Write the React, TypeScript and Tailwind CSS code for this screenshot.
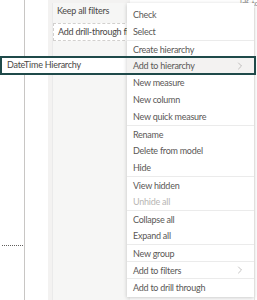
import { ChevronRight } from 'lucide-react'

type Item = { label: string; sep?: boolean; disabled?: boolean; sub?: boolean; active?: boolean }

const items: Item[] = [
  { label: 'Check' },
  { label: 'Select' },
  { label: 'Create hierarchy', sep: true },
  { label: 'Add to hierarchy', sub: true, active: true },
  { label: 'New measure' },
  { label: 'New column' },
  { label: 'New quick measure' },
  { label: 'Rename', sep: true },
  { label: 'Delete from model' },
  { label: 'Hide' },
  { label: 'View hidden', sep: true },
  { label: 'Unhide all', disabled: true },
  { label: 'Collapse all', sep: true },
  { label: 'Expand all' },
  { label: 'New group', sep: true },
  { label: 'Add to filters', sub: true, sep: true },
  { label: 'Add to drill through', sep: true },
]

function MenuRow({ item }: { item: Item }) {
  return (
    <div
      className={`flex items-center h-[17px] pl-[6px] pr-[8px] ${item.sep ? 'border-t border-[#ebebeb]' : ''} ${item.active ? 'bg-[#f3f2f1]' : ''}`}
    >
      <span className={`flex-1 ${item.disabled ? 'text-[#b8b6b4]' : 'text-[#5a5856]'}`}>{item.label}</span>
      {item.sub && <ChevronRight className="w-3 h-3 text-[#a19f9d]" strokeWidth={1.25} />}
    </div>
  )
}

export default function App() {
  return (
    <div
      className="relative w-[257px] h-[300px] overflow-hidden bg-white text-[9px] tracking-[-0.25px]"
      style={{ fontFamily: 'Lato, "Open Sans", sans-serif' }}
    >
      {/* background page */}
      <div className="flex h-full">
        <div className="w-[25px] h-full border-r border-[#c8c6c4] flex flex-col justify-end pb-[54px]">
          <div className="border-t border-dotted border-[#605e5c] mr-[1px] ml-[2px]" />
        </div>
        <div className="w-[23px]" />
        <div className="w-[82px] h-full bg-[#f3f2f1] pl-[4px] pt-[3px]">
          <div className="h-full bg-[#f6f6f5] border-l border-[#eaeaea]">
            <div className="text-[#4a4846] pl-[4px] h-[16px] leading-[16px]">Keep all filters</div>
            <div className="mt-[4px] h-[18px] bg-white border border-dashed border-[#d2d0ce] pl-[4px] leading-[16px] text-[#4a4846] whitespace-nowrap overflow-hidden">
              Add drill-through filters
            </div>
          </div>
        </div>
        <div className="flex-1 pl-[110px] text-[#8a8886] text-[8px] leading-[6px] whitespace-nowrap overflow-hidden">
          ldf_tooltip
        </div>
      </div>

      {/* dragged field */}
      <div className="absolute left-[1px] top-[57px] w-[128px] h-[17px] bg-white pl-[6px] leading-[15px] text-[#4a4846]">
        DateTime Hierarchy
      </div>

      {/* context menu */}
      <div className="absolute left-[127px] top-[3px] w-[127px] h-[294px] bg-white pt-[3px] shadow-[0_1px_4px_rgba(0,0,0,0.22)] leading-[17px]">
        {items.map((item) => (
          <MenuRow key={item.label} item={item} />
        ))}
      </div>

      {/* scroll edge */}
      <div className="absolute right-[2px] top-[8px] bottom-0 w-[1px] bg-[#e1dfdd]" />

      {/* highlight outline */}
      <div className="absolute left-0 top-[56px] w-[256px] h-[19px] border-2 border-[#1f4a4a] pointer-events-none" />
    </div>
  )
}
